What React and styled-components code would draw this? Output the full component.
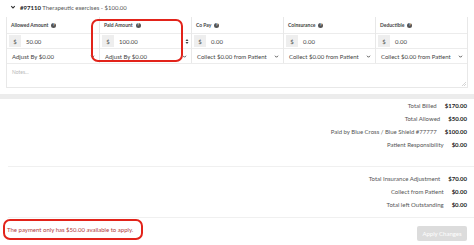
import React from "react"
import styled, { createGlobalStyle } from "styled-components"

const GlobalStyle = createGlobalStyle`
	html, body {
		margin: 0;
		padding: 0;
		background: #fff;
	}
	body {
		font-family: Lato, "Open Sans", sans-serif;
		color: #333;
	}
`

const Page = styled.div`
	width: 474px;
	height: 245px;
	overflow: hidden;
	display: flex;
	flex-direction: column;
`

const Header = styled.div`
	display: flex;
	align-items: center;
	gap: 4px;
	height: 14px;
	margin-bottom: 3px;
	padding-left: 10px;
	font-size: 6px;
`

const Code = styled.span`
	font-weight: 700;
	color: #222;
`

const Title = styled.span`
	color: #555;
`

const Table = styled.div`
	position: relative;
	margin: 0 6px;
	border: 1px solid #e8e8e8;
	border-top: none;
	display: grid;
	grid-template-columns: repeat(5, 1fr);
`

const Column = styled.div`
	display: flex;
	flex-direction: column;
	border-left: ${p => (p.first ? "none" : "1px solid #e8e8e8")};
`

const Label = styled.div`
	display: flex;
	align-items: center;
	gap: 3px;
	height: 16px;
	padding-left: 4px;
	font-size: 5px;
	font-weight: 700;
	color: #444;
`

const Help = styled.span`
	display: inline-flex;
	align-items: center;
	justify-content: center;
	width: 5px;
	height: 5px;
	border-radius: 50%;
	background: #555;
	color: #fff;
	font-size: 4px;
	font-weight: 700;
	line-height: 1;
`

const InputRow = styled.div`
	position: relative;
	display: flex;
	align-items: center;
	height: 15px;
	border-top: 1px solid #ececec;
	padding: 1px 2px;
	box-sizing: border-box;
	font-size: 6px;
	color: #444;
`

const Addon = styled.span`
	display: flex;
	align-items: center;
	justify-content: center;
	width: 12px;
	height: 100%;
	background: #eee;
	color: #555;
	margin-right: 5px;
`

const Spinner = styled.svg`
	position: absolute;
	right: 2px;
	top: 4px;
`

const SelectRow = styled.div`
	display: flex;
	align-items: center;
	justify-content: space-between;
	height: 14px;
	border-top: 1px solid #ececec;
	padding: 0 4px 0 5px;
	font-size: 6px;
	color: #444;
`

const Notes = styled.div`
	position: relative;
	grid-column: 1 / -1;
	height: 24px;
	border-top: 1px solid #ececec;
	padding: 5px 5px 0;
	box-sizing: border-box;
	font-size: 5px;
	color: #b8b8b8;
`

const Grip = styled.svg`
	position: absolute;
	right: 1px;
	bottom: 1px;
`

const Highlight = styled.div`
	position: absolute;
	left: 84px;
	top: 2px;
	width: 92px;
	height: 43px;
	box-sizing: border-box;
	border: 2px solid #e2231a;
	border-radius: 7px;
	pointer-events: none;
`

const Band = styled.div`
	height: 5px;
	margin-top: 6px;
	background: #ececec;
`

const Summary = styled.div`
	display: flex;
	flex-direction: column;
	padding: ${p => p.pad};
	border-bottom: 1px solid #f0f0f0;
	margin-left: 8px;
`

const Line = styled.div`
	display: flex;
	justify-content: flex-end;
	align-items: center;
	gap: 8px;
	height: 13px;
	padding-right: 7px;
	font-size: 6px;
`

const LineLabel = styled.span`
	color: #555;
`

const LineValue = styled.span`
	font-weight: 700;
	color: #222;
`

const Footer = styled.div`
	display: flex;
	justify-content: space-between;
	align-items: flex-start;
	padding: 1px 7px 0 3px;
`

const Message = styled.div`
	display: flex;
	align-items: center;
	width: 140px;
	height: 21px;
	box-sizing: border-box;
	border: 2px solid #e2231a;
	border-radius: 7px;
	padding-left: 2px;
	font-size: 6px;
	color: #b23a3a;
`

const ApplyButton = styled.button`
	margin-top: 7px;
	width: 50px;
	height: 15px;
	border: none;
	border-radius: 2px;
	background: #dcdcdc;
	color: #fff;
	font-family: inherit;
	font-size: 6px;
	padding: 0;
`

const Chevron = ({ size = 5, color = "#444" }) => (
	<svg width={size} height={size} viewBox="0 0 10 10">
		<path d="M2 3.5 L5 6.5 L8 3.5" fill="none" stroke={color} strokeWidth="1.8" />
	</svg>
)

const columns = [
	{ label: "Allowed Amount", value: "50.00", select: "Adjust By $0.00" },
	{ label: "Paid Amount", value: "100.00", select: "Adjust By $0.00", spin: true },
	{ label: "Co Pay", value: "0.00", select: "Collect $0.00 from Patient" },
	{ label: "Coinsurance", value: "0.00", select: "Collect $0.00 from Patient" },
	{ label: "Deductible", value: "0.00", select: "Collect $0.00 from Patient" },
]

const totals = [
	["Total Billed", "$170.00"],
	["Total Allowed", "$50.00"],
	["Paid by Blue Cross / Blue Shield #77777", "$100.00"],
	["Patient Responsibility", "$0.00"],
]

const balances = [
	["Total Insurance Adjustment", "$70.00"],
	["Collect from Patient", "$0.00"],
	["Total left Outstanding", "$0.00"],
]

const App = () => (
	<Page>
		<GlobalStyle />
		<Header>
			<Chevron size={6} color="#333" />
			<span>
				<Code>#97110</Code> <Title>Therapeutic exercises - $100.00</Title>
			</span>
		</Header>
		<Table>
			{columns.map((c, i) => (
				<Column key={c.label} first={i === 0}>
					<Label>
						{c.label}
						<Help>?</Help>
					</Label>
					<InputRow>
						<Addon>$</Addon>
						{c.value}
						{c.spin && (
							<Spinner width="4" height="7" viewBox="0 0 4 7">
								<path d="M0.5 3 L2 1 L3.5 3 Z M0.5 4 L2 6 L3.5 4 Z" fill="#444" />
							</Spinner>
						)}
					</InputRow>
					<SelectRow>
						<span>{c.select}</span>
						<Chevron />
					</SelectRow>
				</Column>
			))}
			<Notes>
				Notes...
				<Grip width="4" height="4" viewBox="0 0 4 4">
					<path d="M4 0 L0 4 M4 2 L2 4" stroke="#bbb" strokeWidth="0.6" />
				</Grip>
			</Notes>
			<Highlight />
		</Table>
		<Band />
		<Summary pad="0 0 15px">
			{totals.map(([l, v]) => (
				<Line key={l}>
					<LineLabel>{l}</LineLabel>
					<LineValue>{v}</LineValue>
				</Line>
			))}
		</Summary>
		<Summary pad="5px 0 6px">
			{balances.map(([l, v]) => (
				<Line key={l}>
					<LineLabel>{l}</LineLabel>
					<LineValue>{v}</LineValue>
				</Line>
			))}
		</Summary>
		<Footer>
			<Message>The payment only has $50.00 available to apply.</Message>
			<ApplyButton>Apply Changes</ApplyButton>
		</Footer>
	</Page>
)

export default App
